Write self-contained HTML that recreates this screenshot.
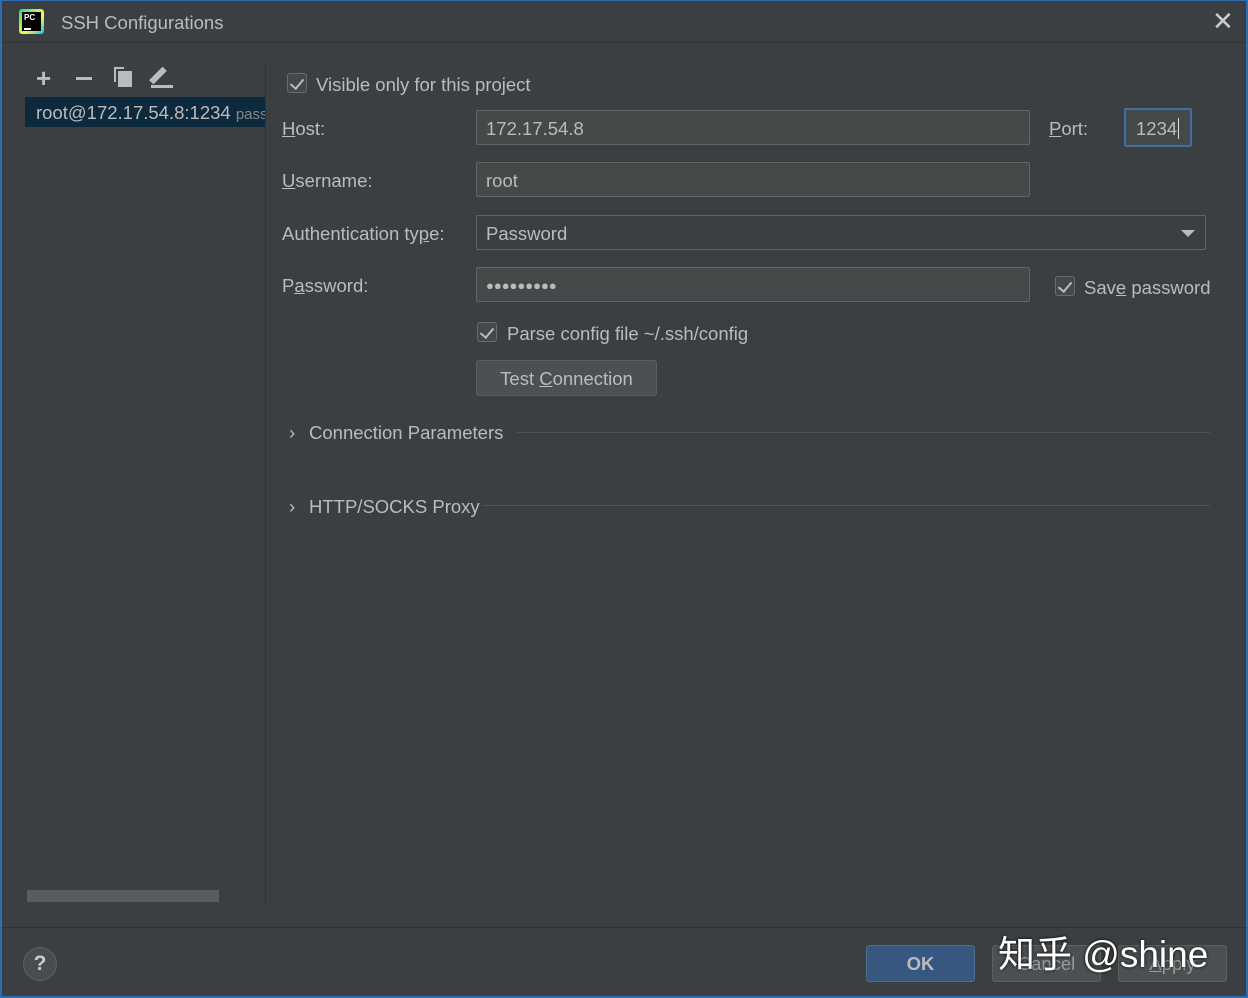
<!DOCTYPE html>
<html><head><meta charset="utf-8"><style>
*{box-sizing:border-box;margin:0;padding:0}
body{width:1248px;height:998px;background:#3c3f41;font-family:"Liberation Sans","Noto Sans CJK SC",sans-serif;color:#bbbbbb;font-size:18.5px;position:relative;overflow:hidden}
.a{position:absolute}
.win{left:0;top:0;width:1248px;height:998px;border:2px solid #2e6db4;border-top:1px solid #2e6db4}
.fld{background:#45494a;border:1px solid #646464;border-radius:2px;padding-left:9px;line-height:35px;height:35px}
.cb{width:20px;height:20px;border:1px solid #6b6b6b;border-radius:3px;background:#43494a}
.cb::after{content:"";position:absolute;left:5px;top:2px;width:6px;height:11px;border:solid #bbb;border-width:0 2px 2px 0;transform:rotate(40deg)}
.btn{border:1px solid #5e6060;border-radius:3px;background:#4c5052;text-align:center;line-height:36px}
u{text-decoration:underline}
.line{height:1px;background:#515151}
</style></head><body>
<div class="a win"></div>
<div class="a" style="left:19px;top:9px;width:25px;height:25px;background:linear-gradient(135deg,#21d789,#fcf84a 60%,#07c3f2);border-radius:3px"></div>
<div class="a" style="left:22px;top:12px;width:19px;height:19px;background:#000;color:#fff;font-size:8px;font-weight:bold;padding:1px 2px">PC<div style="width:7px;height:2px;background:#fff;margin-top:6px"></div></div>
<div class="a" style="left:61px;top:12px;font-size:18.5px;color:#bbb">SSH Configurations</div>
<div class="a" style="left:1212px;top:6px;font-size:26px;color:#ccc">✕</div>
<div class="a line" style="left:2px;top:42px;width:1244px;background:#313335"></div>

<div class="a" style="left:36px;top:63px;font-size:26px;font-weight:bold;color:#bbb">+</div>
<div class="a" style="left:76px;top:77px;width:16px;height:3px;background:#bbb"></div>
<div class="a" style="left:114px;top:67px;width:10px;height:15px;border:2px solid #bbb;border-width:2px 0 0 2px"></div>
<div class="a" style="left:118px;top:71px;width:14px;height:16px;background:#bbb"></div>
<div class="a" style="left:155px;top:66px;width:6px;height:19px;background:#bbb;transform:rotate(45deg)"></div>
<div class="a" style="left:151px;top:85px;width:22px;height:3px;background:#bbb"></div>
<div class="a" style="left:25px;top:97px;width:240px;height:30px;background:#0d293e;white-space:nowrap;overflow:hidden;padding-left:11px;line-height:32px">root@172.17.54.8:1234 <span style="font-size:15px;color:#888">pass</span></div>
<div class="a" style="left:27px;top:890px;width:192px;height:12px;background:#5a5d5f"></div>
<div class="a" style="left:265px;top:62px;width:1px;height:843px;background:#323232"></div>

<div class="a cb" style="left:287px;top:73px"></div>
<div class="a" style="left:316px;top:74px">Visible only for this project</div>
<div class="a" style="left:282px;top:118px"><u>H</u>ost:</div>
<div class="a fld" style="left:476px;top:110px;width:554px">172.17.54.8</div>
<div class="a" style="left:1049px;top:118px"><u>P</u>ort:</div>
<div class="a fld" style="left:1124px;top:108px;width:68px;height:39px;border:2px solid #3d6fa5;line-height:37px;padding-left:10px">1234<span style="border-left:1px solid #ddd;margin-left:1px"></span></div>
<div class="a" style="left:282px;top:170px"><u>U</u>sername:</div>
<div class="a fld" style="left:476px;top:162px;width:554px">root</div>
<div class="a" style="left:282px;top:223px">Authentication ty<u>p</u>e:</div>
<div class="a fld" style="left:476px;top:215px;width:730px;background:#3c3f41">Password</div>
<div class="a" style="left:1181px;top:230px;width:0;height:0;border-left:7px solid transparent;border-right:7px solid transparent;border-top:7px solid #bbb"></div>
<div class="a" style="left:282px;top:275px">P<u>a</u>ssword:</div>
<div class="a fld" style="left:476px;top:267px;width:554px;letter-spacing:0px;font-size:13px">●●●●●●●●●</div>
<div class="a cb" style="left:1055px;top:276px"></div>
<div class="a" style="left:1084px;top:277px">Sav<u>e</u> password</div>
<div class="a cb" style="left:477px;top:322px"></div>
<div class="a" style="left:507px;top:323px">Parse config file ~/.ssh/config</div>
<div class="a btn" style="left:476px;top:360px;width:181px;height:36px">Test <u>C</u>onnection</div>

<div class="a" style="left:289px;top:422px">›</div>
<div class="a" style="left:309px;top:422px">Connection Parameters</div>
<div class="a line" style="left:517px;top:432px;width:693px"></div>
<div class="a" style="left:289px;top:496px">›</div>
<div class="a" style="left:309px;top:496px">HTTP/SOCKS Proxy</div>
<div class="a line" style="left:482px;top:505px;width:728px"></div>

<div class="a line" style="left:2px;top:927px;width:1244px;background:#2f3133"></div>
<div class="a" style="left:23px;top:947px;width:34px;height:34px;border-radius:50%;background:#4a4d4f;border:1px solid #5d6063;text-align:center;line-height:32px;font-weight:bold;font-size:21px;color:#ccc">?</div>
<div class="a btn" style="left:866px;top:945px;width:109px;height:37px;background:#365880;border-color:#4c708c;font-weight:bold;color:#bbb">OK</div>
<div class="a btn" style="left:992px;top:945px;width:109px;height:37px;color:#999">Cancel</div>
<div class="a btn" style="left:1118px;top:945px;width:109px;height:37px;color:#999"><u>A</u>pply</div>
<div class="a" style="left:998px;top:924px;font-size:37px;color:#fff;text-shadow:0 0 3px #000;white-space:nowrap">知乎 @shine</div>
</body></html>
